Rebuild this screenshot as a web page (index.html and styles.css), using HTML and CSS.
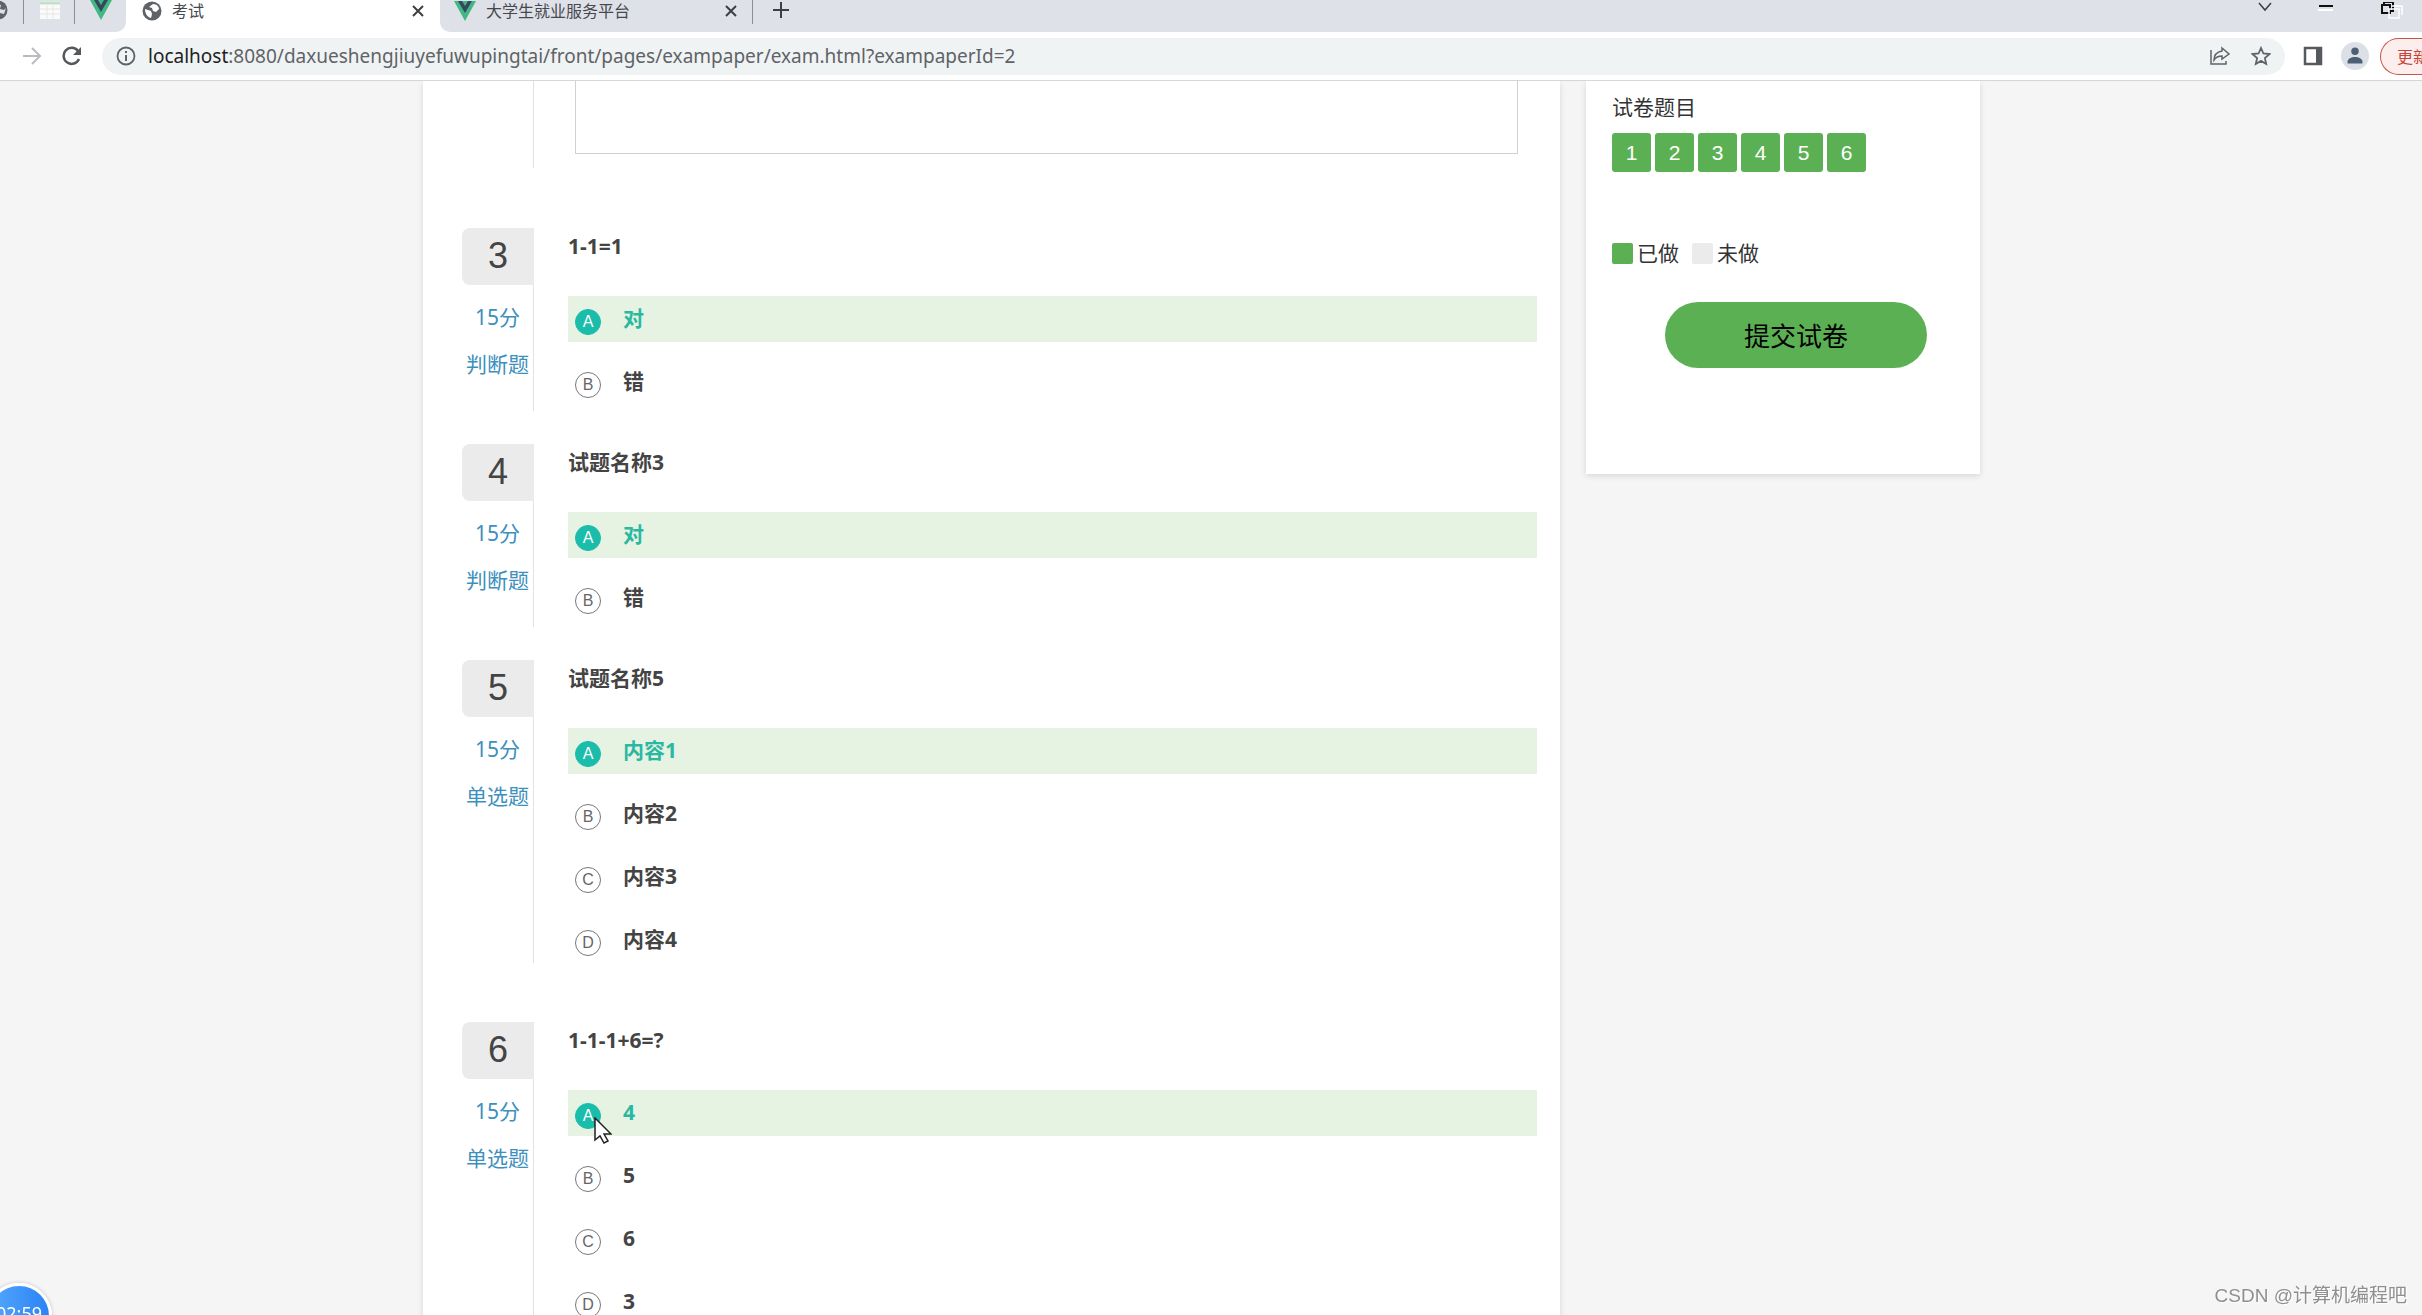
FILE: index.html
```html
<!DOCTYPE html>
<html lang="zh-CN">
<head>
    <meta charset="UTF-8">
    <meta name="viewport" content="width=device-width, initial-scale=1.0">
    <title>考试</title>
    <link rel="stylesheet" href="styles.css">
</head>
<body>
    <header class="browser">
        <div class="tabs">
            <div class="tab tab-pinned tab-first">
                <svg width="20" height="20" viewBox="0 0 20 20"><circle cx="10" cy="10" r="9.500" fill="#5f6368"/><path d="M9 4l4 1-1 4 4 1 2-2-2 6-4-1-3-3z" fill="#dee1e6"/></svg>
            </div>
            <div class="tab tab-pinned">
                <svg width="22" height="20" viewBox="0 0 22 20"><rect x="1" y="1" width="20" height="18" fill="#fafafa"/><path d="M1 3h20" stroke="#c3e0cb" stroke-width="3"/><path d="M1 9h20M1 14h20M8 5v14M14 5v14" stroke="#e6e6e6"/></svg>
            </div>
            <div class="tab tab-pinned tab-before">
                <svg width="22" height="20" viewBox="0 0 22 20"><path d="M0 0h22L11 20z" fill="#41b883"/><path d="M4 0h4l3 5 3-5h4l-7 12z" fill="#35495e"/></svg>
            </div>
            <div class="tab tab-active">
                <svg width="20" height="20" viewBox="0 0 20 20"><circle cx="10" cy="10" r="9.500" fill="#5f6368"/><path d="M3 8l6 2 1 3-1 4c-4-1-6-5-6-9zM11 3c4 0 6 3 6 5l-3 3-3-1-1-3-3-1z" fill="#fff"/></svg>
                <span class="tab-title">考试</span>
                <button class="icon-btn" aria-label="关闭"><svg width="12" height="12" viewBox="0 0 12 12"><path d="M1 1l10 10M11 1L1 11" stroke="#3c4043" stroke-width="2"/></svg></button>
            </div>
            <div class="tab tab-next">
                <svg width="22" height="20" viewBox="0 0 22 20"><path d="M0 0h22L11 20z" fill="#41b883"/><path d="M4 0h4l3 5 3-5h4l-7 12z" fill="#35495e"/></svg>
                <span class="tab-title">大学生就业服务平台</span>
                <button class="icon-btn" aria-label="关闭"><svg width="12" height="12" viewBox="0 0 12 12"><path d="M1 1l10 10M11 1L1 11" stroke="#3c4043" stroke-width="2"/></svg></button>
            </div>
            <button class="icon-btn new-tab" aria-label="新标签页"><svg width="16" height="16" viewBox="0 0 16 16"><path d="M8 0v16M0 8h16" stroke="#3c4043" stroke-width="2"/></svg></button>
            <div class="window-btns">
                <button class="icon-btn" aria-label="搜索标签页"><svg width="14" height="10" viewBox="0 0 14 10"><path d="M1 1l6 7 6-7" fill="none" stroke="#3c4043" stroke-width="1.500"/></svg></button>
                <button class="icon-btn" aria-label="最小化"><svg width="16" height="10" viewBox="0 0 16 10"><path d="M1 4h14" stroke="#111" stroke-width="2"/><path d="M0 8h15" stroke="#fff" stroke-width="2"/></svg></button>
                <button class="icon-btn" aria-label="还原"><svg width="24" height="20" viewBox="0 0 24 20"><path d="M2 3h8v8H2zM4 3V0h9v9h-3" fill="none" stroke="#111" stroke-width="2"/><path d="M9 7h10v9H9zM12 4h10v9" fill="none" stroke="#fff" stroke-width="1.500"/></svg></button>
            </div>
        </div>
        <div class="toolbar">
            <button class="icon-btn" aria-label="前进"><svg width="20" height="18" viewBox="0 0 20 18"><path d="M1 9h17M10 1l8 8-8 8" fill="none" stroke="#b9bbbe" stroke-width="2"/></svg></button>
            <button class="icon-btn" aria-label="刷新"><svg width="20" height="20" viewBox="0 0 20 20"><path d="M17 13a8 8 0 1 1-1-8" fill="none" stroke="#55585c" stroke-width="2.500"/><path d="M19 1v8h-8z" fill="#55585c"/></svg></button>
            <div class="address">
                <svg width="20" height="20" viewBox="0 0 20 20"><circle cx="10" cy="10" r="8.500" fill="none" stroke="#5f6368" stroke-width="1.800"/><path d="M10 9v6M10 5v2" stroke="#5f6368" stroke-width="2"/></svg>
                <span class="url"><span class="host">localhost</span>:8080/daxueshengjiuyefuwupingtai/front/pages/exampaper/exam.html?exampaperId=2</span>
                <button class="icon-btn" aria-label="分享"><svg width="22" height="20" viewBox="0 0 22 20"><path d="M2 4v14h15v-3" fill="none" stroke="#5f6368" stroke-width="1.500"/><path d="M13 2l7 6-7 5v-3c-4 0-6 1-8 4 0-5 3-8 8-9z" fill="none" stroke="#5f6368" stroke-width="1.500"/></svg></button>
                <button class="icon-btn" aria-label="收藏"><svg width="20" height="20" viewBox="0 0 20 20"><path d="M10 2l2.400 5.500 6 .6-4.500 4 1.300 5.900-5.200-3.100L4.800 18l1.300-5.900-4.500-4 6-.6z" fill="none" stroke="#5f6368" stroke-width="1.800"/></svg></button>
            </div>
            <div class="tools">
                <button class="icon-btn" aria-label="侧边栏"><svg width="20" height="20" viewBox="0 0 20 20"><rect x="2" y="2" width="16" height="16" fill="none" stroke="#55585c" stroke-width="2.500"/><path d="M13 1h6v18h-6z" fill="#55585c"/></svg></button>
                <button class="icon-btn" aria-label="用户"><svg width="28" height="28" viewBox="0 0 30 30"><circle cx="15" cy="15" r="15" fill="#dbe0e6"/><circle cx="15" cy="10" r="4" fill="#4d5f72"/><path d="M7 23v-2c0-3 4-5 8-5s8 2 8 5v2z" fill="#4d5f72"/></svg></button>
            </div>
            <button class="update">更新</button>
        </div>
    </header>

    <main class="page">
        <section class="paper">
            <div class="question question-text">
                <div class="side"></div>
                <div class="body"><textarea class="answer" aria-label="答案"></textarea></div>
            </div>

            <div class="question">
                <div class="side">
                    <div class="number">3</div>
                    <div class="info">15分</div>
                    <div class="info">判断题</div>
                </div>
                <div class="body">
                    <div class="title">1-1=1</div>
                    <label class="option"><span class="mark"><input type="radio" name="q3" checked><span class="letter">A</span></span>对</label>
                    <label class="option"><span class="mark"><input type="radio" name="q3"><span class="letter">B</span></span>错</label>
                </div>
            </div>

            <div class="question">
                <div class="side">
                    <div class="number">4</div>
                    <div class="info">15分</div>
                    <div class="info">判断题</div>
                </div>
                <div class="body">
                    <div class="title">试题名称3</div>
                    <label class="option"><span class="mark"><input type="radio" name="q4" checked><span class="letter">A</span></span>对</label>
                    <label class="option"><span class="mark"><input type="radio" name="q4"><span class="letter">B</span></span>错</label>
                </div>
            </div>

            <div class="question question-single">
                <div class="side">
                    <div class="number">5</div>
                    <div class="info">15分</div>
                    <div class="info">单选题</div>
                </div>
                <div class="body">
                    <div class="title">试题名称5</div>
                    <label class="option"><span class="mark"><input type="radio" name="q5" checked><span class="letter">A</span></span>内容1</label>
                    <label class="option"><span class="mark"><input type="radio" name="q5"><span class="letter">B</span></span>内容2</label>
                    <label class="option"><span class="mark"><input type="radio" name="q5"><span class="letter">C</span></span>内容3</label>
                    <label class="option"><span class="mark"><input type="radio" name="q5"><span class="letter">D</span></span>内容4</label>
                </div>
            </div>

            <div class="question question-single">
                <div class="side">
                    <div class="number">6</div>
                    <div class="info">15分</div>
                    <div class="info">单选题</div>
                </div>
                <div class="body">
                    <div class="title">1-1-1+6=?</div>
                    <label class="option">
                        <span class="mark">
                            <input type="radio" name="q6" checked><span class="letter">A</span>
                            <svg class="cursor" width="18" height="28" viewBox="0 0 18 28"><path d="M1 1v22l5-4 4 7 4-2-4-7h7z" fill="#fff" stroke="#222" stroke-width="1.500"/></svg>
                        </span>4
                    </label>
                    <label class="option"><span class="mark"><input type="radio" name="q6"><span class="letter">B</span></span>5</label>
                    <label class="option"><span class="mark"><input type="radio" name="q6"><span class="letter">C</span></span>6</label>
                    <label class="option"><span class="mark"><input type="radio" name="q6"><span class="letter">D</span></span>3</label>
                </div>
            </div>
        </section>

        <aside class="card">
            <div class="card-title">试卷题目</div>
            <div class="numbers">
                <button class="num">1</button>
                <button class="num">2</button>
                <button class="num">3</button>
                <button class="num">4</button>
                <button class="num">5</button>
                <button class="num">6</button>
            </div>
            <div class="legend">
                <span class="legend-item"><i class="dot done"></i>已做</span>
                <span class="legend-item"><i class="dot"></i>未做</span>
            </div>
            <button class="submit">提交试卷</button>
        </aside>
    </main>

    <div class="timer">02:59</div>
    <div class="watermark">CSDN @计算机编程吧</div>
</body>
</html>
```

FILE: styles.css
```css
* {
    box-sizing: border-box;
}

body {
    margin: 0;
    height: 100vh;
    display: flex;
    flex-direction: column;
    overflow: hidden;
    background-color: #f5f5f5;
    color: #444;
    font-family: "Noto Sans", "Noto Sans CJK SC", sans-serif;
    font-size: 21px;
}

button {
    border: none;
    padding: 0;
    font-family: inherit;
    cursor: pointer;
}

svg {
    display: block;
    flex-shrink: 0;
}

/* browser bar */
.browser {
    flex-shrink: 0;
    background-color: #fff;
    border-bottom: 1px solid #d5d6d8;
}

.tabs {
    display: flex;
    height: 32px;
    background: linear-gradient(to right, #fff 460px, #dee1e8 460px);
}

.tab {
    display: flex;
    align-items: center;
    padding-bottom: 12px;
    background-color: #dee1e8;
}

.tab-pinned {
    width: 51px;
    justify-content: center;
    position: relative;
}

.tab-pinned:not(.tab-before)::after,
.tab-next::after {
    content: "";
    position: absolute;
    right: 0;
    top: 0;
    width: 1px;
    height: 24px;
    background-color: #8a8d91;
}

.tab-first {
    width: 24px;
    justify-content: flex-end;
    padding-right: 16px;
}

.tab-before {
    border-bottom-right-radius: 10px;
}

.tab-active {
    width: 314px;
    padding: 0 16px 10px;
    background-color: #fff;
}

.tab-next {
    width: 313px;
    padding: 0 16px 10px 14px;
    border-bottom-left-radius: 10px;
    position: relative;
}

.tab-title {
    flex: 1;
    margin-left: 10px;
    font-size: 16px;
    line-height: 20px;
    color: #45484d;
}

.icon-btn {
    display: flex;
    background: none;
}

.new-tab {
    padding: 2px 20px;
}

.window-btns {
    display: flex;
    flex: 1;
    justify-content: flex-end;
    gap: 46px;
    padding-top: 2px;
    padding-right: 18px;
}

.toolbar {
    display: flex;
    align-items: center;
    height: 48px;
    padding-left: 22px;
    overflow: hidden;
}

.toolbar > .icon-btn {
    margin-right: 20px;
}

.address {
    flex: 1;
    display: flex;
    align-items: center;
    height: 37px;
    padding: 0 14px;
    border-radius: 19px;
    background-color: #f0f3f4;
}

.url {
    flex: 1;
    margin-left: 12px;
    font-size: 19px;
    color: #5f6368;
}

.host {
    color: #202124;
}

.address .icon-btn + .icon-btn {
    margin-left: 20px;
}

.tools {
    display: flex;
    align-items: center;
    gap: 18px;
    padding: 0 11px 0 18px;
}

.update {
    width: 42px;
    height: 37px;
    padding-left: 16px;
    border: 1px solid #c5544b;
    border-right: none;
    border-radius: 19px 0 0 19px;
    background-color: #fceeed;
    color: #c5443a;
    font-size: 16px;
    text-align: left;
    white-space: nowrap;
    overflow: hidden;
}

/* exam page */
.page {
    flex: 1;
    min-height: 0;
    display: flex;
    justify-content: center;
    align-items: flex-start;
    gap: 26px;
    padding-right: 19px;
    overflow: hidden;
}

.paper {
    width: 1137px;
    padding: 0 23px 0 39px;
    background-color: #fff;
    box-shadow: 0 2px 6px rgba(0, 0, 0, 0.12);
}

.question {
    display: flex;
    margin-bottom: 33px;
}

.side {
    width: 72px;
    flex-shrink: 0;
    border-right: 1px solid #e2e2e2;
    text-align: center;
}

.number {
    height: 57px;
    margin-right: -1px;
    margin-bottom: 9px;
    border-radius: 8px 0 0 8px;
    background-color: #ebebeb;
    font-family: "Liberation Sans", sans-serif;
    font-size: 36px;
    line-height: 55px;
}

.info {
    color: #3d8fbd;
    line-height: 47px;
}

.body {
    flex: 1;
    margin-left: 34px;
    padding-bottom: 6px;
}

.title {
    height: 68px;
    font-weight: bold;
    line-height: 36px;
}

.option {
    display: flex;
    align-items: center;
    height: 46px;
    padding-left: 7px;
    font-weight: bold;
    line-height: 44px;
    padding-bottom: 2px;
    cursor: pointer;
}

.option + .option {
    margin-top: 17px;
}

.option:has(input:checked) {
    background-color: #e6f3e2;
    color: #2bb8a3;
}

.mark {
    display: grid;
    position: relative;
    width: 26px;
    margin-top: 8px;
    margin-right: 22px;
}

.mark input {
    grid-area: 1 / 1;
    appearance: none;
    width: 26px;
    height: 26px;
    margin: 0;
    border: 1px solid #777;
    border-radius: 50%;
}

.mark input:checked {
    border-color: #1abcaa;
    background-color: #1abcaa;
}

.letter {
    grid-area: 1 / 1;
    z-index: 1;
    color: #666;
    font-family: "Liberation Sans", sans-serif;
    font-size: 16px;
    font-weight: normal;
    line-height: 26px;
    text-align: center;
}

input:checked + .letter {
    color: #fff;
}

.cursor {
    position: absolute;
    left: 19px;
    top: 14px;
    z-index: 2;
}

.question-text {
    height: 87px;
    margin-bottom: 60px;
}

.question-single {
    margin-bottom: 59px;
}

.question-single .body {
    padding-bottom: 0;
}

.answer {
    display: block;
    width: calc(100% - 26px);
    height: 73px;
    margin-left: 7px;
    border: 1px solid #d0d0d0;
    border-top: none;
    resize: none;
}

/* right card */
.card {
    width: 394px;
    height: 393px;
    padding: 12px 0 0 26px;
    background-color: #fff;
    box-shadow: 0 2px 6px rgba(0, 0, 0, 0.12);
}

.card-title {
    height: 40px;
    line-height: 28px;
    color: #333;
}

.numbers {
    display: flex;
    gap: 4px;
}

.num {
    width: 39px;
    height: 39px;
    border-radius: 3px;
    background-color: #5cb054;
    color: #fff;
    font-family: "Liberation Sans", sans-serif;
    font-size: 21px;
}

.legend {
    display: flex;
    gap: 13px;
    margin-top: 67px;
    line-height: 28px;
    color: #333;
}

.legend-item {
    display: flex;
    align-items: center;
    gap: 4px;
}

.dot {
    width: 21px;
    height: 21px;
    border-radius: 2px;
    background-color: #ebebeb;
}

.done {
    background-color: #5cb054;
}

.submit {
    display: block;
    width: 262px;
    height: 66px;
    margin: 35px auto 0;
    border-radius: 33px;
    background-color: #5cb054;
    color: #000;
    font-size: 26px;
}

/* floating things */
.timer {
    position: fixed;
    left: -14px;
    bottom: -34px;
    width: 66px;
    height: 66px;
    border: 3px solid #fff;
    border-radius: 50%;
    background: linear-gradient(to right, #55a8fb, #2b83f6);
    box-shadow: 0 0 4px rgba(0, 0, 0, 0.2);
    color: #fff;
    font-size: 18px;
    line-height: 54px;
    text-align: center;
}

.watermark {
    position: fixed;
    right: 15px;
    bottom: 4px;
    color: #8f8f8f;
    font-family: "Liberation Sans", "Noto Sans CJK SC", sans-serif;
    font-size: 19px;
    line-height: 30px;
    text-shadow: 1px 1px 0 #fff;
}
```
